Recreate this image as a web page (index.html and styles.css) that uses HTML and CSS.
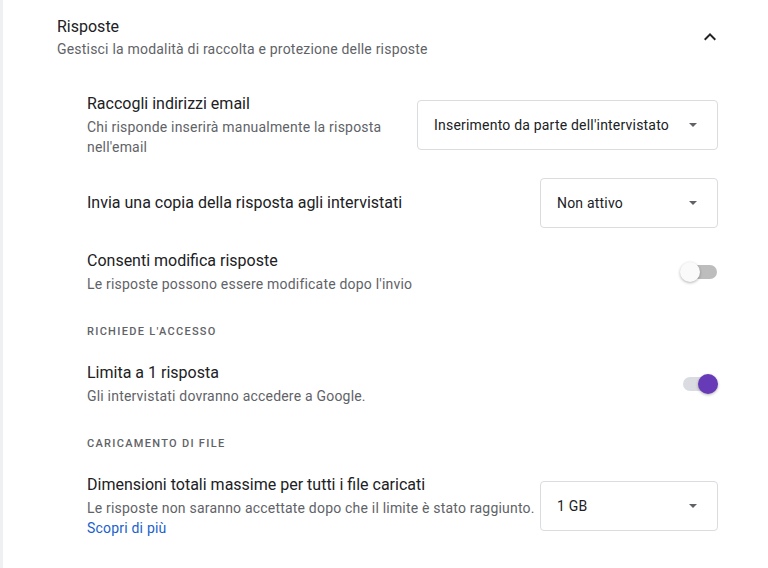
FILE: index.html
```html
<!DOCTYPE html>
<html lang="it">
<head>
<meta charset="utf-8">
<title>Risposte</title>
<link rel="stylesheet" href="styles.css">
</head>
<body>
<div class="page">
  <section class="section">
    <header class="header">
      <div class="header-text">
        <div class="title">Risposte</div>
        <div class="subtitle">Gestisci la modalità di raccolta e protezione delle risposte</div>
      </div>
      <svg class="chevron" width="24" height="24" viewBox="0 0 24 24"><path d="M12 8l-6 6 1.41 1.41L12 10.83l4.59 4.58L18 14z" fill="#202124"/></svg>
    </header>

    <div class="rows">
      <div class="row r1">
        <div class="row-text">
          <div class="row-title">Raccogli indirizzi email</div>
          <div class="row-desc">Chi risponde inserirà manualmente la risposta nell'email</div>
        </div>
        <div class="select"><span>Inserimento da parte dell'intervistato</span><i class="caret"></i></div>
      </div>

      <div class="row r2">
        <div class="row-text">
          <div class="row-title">Invia una copia della risposta agli intervistati</div>
        </div>
        <div class="select"><span>Non attivo</span><i class="caret"></i></div>
      </div>

      <div class="row r3">
        <div class="row-text">
          <div class="row-title">Consenti modifica risposte</div>
          <div class="row-desc">Le risposte possono essere modificate dopo l'invio</div>
        </div>
        <div class="switch"><span class="track"></span><span class="thumb"></span></div>
      </div>

      <div class="label">Richiede l'accesso</div>

      <div class="row r4">
        <div class="row-text">
          <div class="row-title">Limita a 1 risposta</div>
          <div class="row-desc">Gli intervistati dovranno accedere a Google.</div>
        </div>
        <div class="switch on"><span class="track"></span><span class="thumb"></span></div>
      </div>

      <div class="label">Caricamento di file</div>

      <div class="row r5">
        <div class="row-text">
          <div class="row-title">Dimensioni totali massime per tutti i file caricati</div>
          <div class="row-desc">Le risposte non saranno accettate dopo che il limite è stato raggiunto.</div>
          <a class="link" href="#">Scopri di più</a>
        </div>
        <div class="select"><span>1 GB</span><i class="caret"></i></div>
      </div>
    </div>
  </section>
</div>
</body>
</html>
```

FILE: styles.css
```css
* { box-sizing: border-box; }
html, body { margin: 0; padding: 0; background: #fff; }
body {
  font-family: Roboto, "Liberation Sans", Arial, sans-serif;
  color: #202124;
  -webkit-font-smoothing: antialiased;
}
.page {
  min-height: 568px;
  border-left: 3px solid #eef0f2;
}
.section {
  padding: 15px 50px 0 54px;
}
.header {
  display: flex;
  align-items: center;
  justify-content: space-between;
}
.title {
  font-size: 16px;
  line-height: 24px;
  color: #202124;
}
.subtitle {
  font-size: 14px;
  line-height: 20px;
  letter-spacing: 0.2px;
  color: #5f6368;
}
.chevron {
  display: block;
  margin-right: -4px;
}
.rows {
  padding-left: 30px;
  margin-top: 33px;
  display: flex;
  flex-direction: column;
}
.row {
  display: flex;
  align-items: center;
  justify-content: space-between;
  gap: 2px;
}
.row + .row { margin-top: 21px; }
.row-text { flex: 1; min-width: 0; }
.row-title {
  font-size: 16px;
  line-height: 24px;
  color: #202124;
}
.row-desc {
  margin-top: 1px;
  font-size: 14px;
  line-height: 20px;
  letter-spacing: 0.2px;
  color: #5f6368;
}
.r1 .row-text { max-width: 320px; }
.link {
  display: block;
  font-size: 14px;
  line-height: 20px;
  letter-spacing: 0.2px;
  color: #1a5fcc;
  text-decoration: none;
}
.label {
  font-size: 11px;
  line-height: 16px;
  font-weight: 500;
  letter-spacing: 1.3px;
  text-transform: uppercase;
  color: #5f6368;
  margin: 30px 0 21px;
}
.select {
  flex: none;
  display: flex;
  align-items: center;
  justify-content: space-between;
  min-width: 178px;
  height: 50px;
  padding: 0 20px 0 16px;
  border: 1px solid #dadce0;
  border-radius: 4px;
  font-size: 14px;
  letter-spacing: 0.2px;
  color: #202124;
}
.select span { margin-right: 20px; }
.caret {
  display: block;
  width: 0;
  height: 0;
  border-left: 4px solid transparent;
  border-right: 4px solid transparent;
  border-top: 4px solid #5f6368;
}
.switch {
  flex: none;
  position: relative;
  width: 38px;
  height: 20px;
}
.track {
  position: absolute;
  left: 3px;
  top: 3px;
  width: 34px;
  height: 14px;
  border-radius: 7px;
  background: #bdbdbd;
}
.thumb {
  position: absolute;
  left: 0;
  top: 0;
  width: 20px;
  height: 20px;
  border-radius: 50%;
  background: #fafafa;
  box-shadow: 0 1px 3px rgba(0,0,0,0.3);
}
.switch.on .track { background: #dadce2; }
.switch.on .thumb { left: 18px; background: #673ab7; }
```
